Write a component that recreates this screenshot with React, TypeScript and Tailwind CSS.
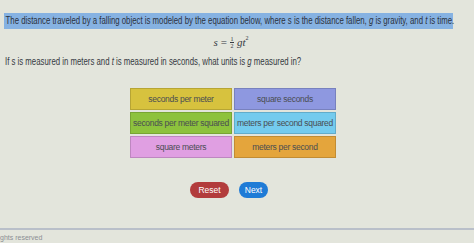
const CELLS = [
  { label: 'seconds per meter', bg: 'bg-[#d7c23e]' },
  { label: 'square seconds', bg: 'bg-[#8e98e0]' },
  { label: 'seconds per meter squared', bg: 'bg-[#8dc23d]' },
  { label: 'meters per second squared', bg: 'bg-[#74cbee]' },
  { label: 'square meters', bg: 'bg-[#e09fe2]' },
  { label: 'meters per second', bg: 'bg-[#e4a53c]' },
]

export default function App() {
  return (
    <div
      className="w-[474px] h-[243px] overflow-hidden bg-[#e3e5dc] text-[#363a42] flex flex-col"
      style={{ fontFamily: '"Liberation Sans", Arial, sans-serif' }}
    >
      {/* Question */}
      <div className="pt-[13px] pl-[4px] flex">
        <div className="h-[16px] w-[449px] bg-[#86b2e2]">
          <div className="origin-left scale-x-[0.78] whitespace-nowrap pl-[2px] text-[10px] leading-[16px] text-[#2c313c]">
            The distance traveled by a falling object is modeled by the equation below, where s is the distance fallen,{' '}
            <i>g</i> is gravity, and <i>t</i> is time.
          </div>
        </div>
      </div>

      {/* Equation */}
      <div className="h-[26px] flex items-center justify-center pr-[12px] text-[11px]">
        <span className="flex items-center gap-[3px]" style={{ fontFamily: '"Liberation Serif", serif' }}>
          <i>s</i>
          <span>=</span>
          <span className="inline-flex flex-col items-center leading-none text-[6px]">
            <span>1</span>
            <span className="w-[4px] border-t border-[#363a42]" />
            <span>2</span>
          </span>
          <span className="flex items-start leading-none">
            <i>gt</i>
            <span className="text-[6px] -mt-[2px]">2</span>
          </span>
        </span>
      </div>

      <div className="mt-[2px] pl-[5px] flex">
        <div className="origin-left scale-x-[0.78] whitespace-nowrap h-[10px] leading-[10px] text-[10px]">
          If s is measured in meters and <i>t</i> is measured in seconds, what units is <i>g</i> measured in?
        </div>
      </div>

      {/* Choices */}
      <div className="ml-[130px] mt-[21px] grid grid-cols-[102px_102px] gap-[2px]">
        {CELLS.map((c) => (
          <div
            key={c.label}
            className={`${c.bg} h-[22px] flex items-center justify-center border border-black/15 text-[8.5px] tracking-[-0.3px] text-[#4a4d52]`}
          >
            {c.label}
          </div>
        ))}
      </div>

      {/* Buttons */}
      <div className="mt-[24px] ml-[190px] flex gap-[10px]">
        <button className="w-[39px] h-[16px] rounded-full bg-[#b23c3c] text-white text-[8.5px] leading-none">
          Reset
        </button>
        <button className="w-[29px] h-[16px] rounded-full bg-[#1f7bd6] text-white text-[8.5px] leading-none">
          Next
        </button>
      </div>

      {/* Footer */}
      <div className="mt-[30px] h-[2px] bg-[#b9bfc9]" />
      <div className="pt-[4px] text-[7px] leading-none text-[#8b8f94]">ghts reserved</div>
    </div>
  )
}
